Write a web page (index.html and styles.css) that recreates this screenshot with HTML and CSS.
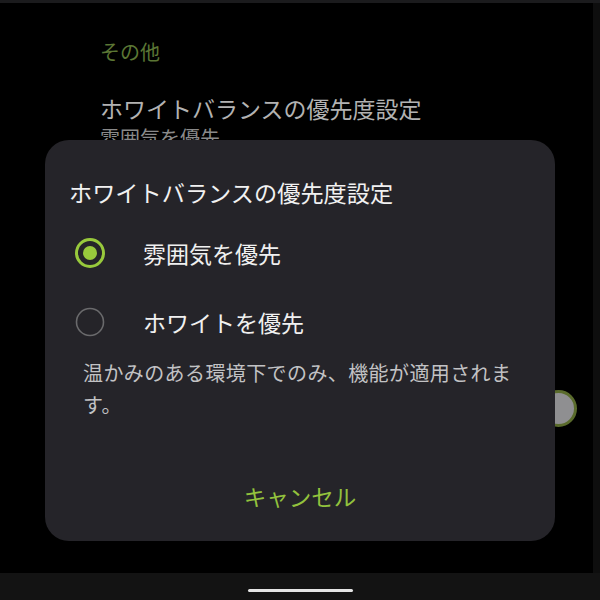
FILE: index.html
```html
<!DOCTYPE html>
<html lang="ja">
<head>
    <meta charset="UTF-8">
    <meta name="viewport" content="width=device-width, initial-scale=1.0">
    <title>カメラ設定</title>
    <link rel="stylesheet" href="styles.css">
</head>
<body>

    <div class="status-line"></div>

    <div class="screen">
        <div class="settings">
            <h2 class="section">その他</h2>

            <div class="item">
                <div class="item-title">ホワイトバランスの優先度設定</div>
                <div class="item-sub">雰囲気を優先</div>
            </div>

            <div class="item item-switch">
                <span class="thumb"></span>
            </div>

            <div class="item item-last">
                <div class="item-title">ホワイトバランスの優先度設定</div>
            </div>
        </div>
        <div class="edge"></div>
    </div>

    <div class="nav-bar">
        <span class="home-pill"></span>
    </div>

    <div class="dialog">
        <h3 class="dialog-title">ホワイトバランスの優先度設定</h3>

        <label class="option">
            <svg class="radio" width="30" height="30" viewBox="0 0 30 30">
                <circle cx="15" cy="15" r="13.5" fill="none" stroke="#98c93c" stroke-width="3"/>
                <circle cx="15" cy="15" r="7" fill="#98c93c"/>
            </svg>
            <span>雰囲気を優先</span>
        </label>

        <label class="option">
            <svg class="radio" width="30" height="30" viewBox="0 0 30 30">
                <circle cx="15" cy="15" r="13.5" fill="none" stroke="#6a6a6c" stroke-width="1.6"/>
            </svg>
            <span>ホワイトを優先</span>
        </label>

        <p class="note">温かみのある環境下でのみ、機能が適用されます。</p>

        <div class="actions">
            <button class="cancel">キャンセル</button>
        </div>
    </div>

</body>
</html>
```

FILE: styles.css
```css
body {
    margin: 0;
    width: 600px;
    height: 600px;
    overflow: hidden;
    background: #000;
    font-family: 'Noto Sans CJK JP', 'Noto Sans', sans-serif;
    position: relative;
}
.status-line {
    height: 3px;
    background: #1b1b1d;
}
.screen {
    display: flex;
    height: 597px;
}
.settings {
    flex: 1;
    padding: 35px 16px 0 100px;
}
.edge {
    width: 7px;
    background: #0e0e0e;
}
.section {
    margin: 0;
    font-size: 20px;
    line-height: 28px;
    font-weight: normal;
    color: #5b7634;
}
.item {
    margin-top: 27px;
}
.item-title {
    font-size: 23px;
    line-height: 30px;
    color: #b2b2b2;
}
.item-sub {
    margin-top: 2px;
    font-size: 20px;
    line-height: 26px;
    color: #8a8a8a;
}
.item-switch {
    margin-top: 239px;
    display: flex;
    justify-content: flex-end;
}
.thumb {
    width: 31px;
    height: 31px;
    border-radius: 50%;
    background: #8f8f91;
    border: 3px solid #5a6b2c;
}
.item-last {
    margin-top: 143px;
}
.nav-bar {
    position: absolute;
    left: 0;
    right: 0;
    bottom: 0;
    height: 27px;
    background: #131313;
    display: flex;
    justify-content: center;
    padding-top: 16px;
    box-sizing: border-box;
}
.home-pill {
    width: 105px;
    height: 3px;
    border-radius: 2px;
    background: #e4e4e4;
}

/* modal over the settings list */
.dialog {
    position: absolute;
    left: 45px;
    top: 140px;
    width: 510px;
    height: 401px;
    box-sizing: border-box;
    padding: 37px 24px 0 24px;
    background: #252429;
    border-radius: 24px;
}
.dialog-title {
    margin: 0 0 11px 0;
    font-size: 23.2px;
    line-height: 30px;
    font-weight: normal;
    color: #f1f1f1;
}
.option {
    display: flex;
    align-items: center;
    height: 69px;
    padding-left: 6px;
    font-size: 23px;
    color: #f0f0f0;
}
.radio {
    margin-right: 38px;
    flex-shrink: 0;
}
.note {
    margin: 1px 0 0 14px;
    width: 440px;
    font-size: 20px;
    letter-spacing: 0.4px;
    line-height: 32px;
    color: #c2c2c4;
}
.actions {
    display: flex;
    justify-content: center;
    margin-top: 60px;
}
.cancel {
    background: none;
    border: none;
    padding: 0;
    font-family: inherit;
    font-size: 22.5px;
    line-height: 30px;
    color: #93c23d;
    cursor: pointer;
}
```
